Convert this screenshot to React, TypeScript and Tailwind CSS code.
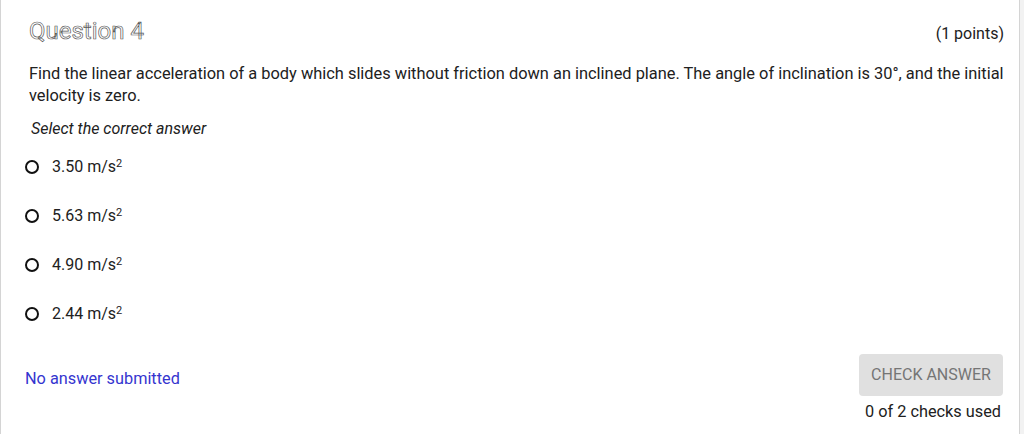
import React from 'react';

const OPTIONS = ['3.50', '5.63', '4.90', '2.44'];

const App: React.FC = () => {
  return (
    <div className="flex h-[434px] w-[1024px] bg-[#f2f2f2] font-['Roboto',sans-serif] text-[#212121]">
      <div className="flex w-[1020px] flex-col border-x border-[#d4d4d4] bg-white pl-[28px] pr-[12px]">
        <div className="flex items-baseline justify-between pt-[16px] pr-[3px]">
          <h2 className="text-[24px] leading-[30px] text-white [-webkit-text-stroke:0.7px_#5a5a5a]">Question 4</h2>
          <span className="text-[16px]">(1 points)</span>
        </div>

        <p className="mt-[17px] text-[16.4px] leading-[22px]">
          Find the linear acceleration of a body which slides without friction down an inclined plane. The angle of
          inclination is 30°, and the initial velocity is zero.
        </p>

        <p className="mt-[11px] pl-[2px] text-[16px] italic leading-[22px]">Select the correct answer</p>

        <div className="mt-[16px] flex flex-col gap-[27px] -ml-[4px]">
          {OPTIONS.map(v => (
            <label key={v} className="flex h-[22px] items-center gap-[13px] text-[16px]">
              <span className="h-[14px] w-[14px] rounded-full border-2 border-[#111]" />
              <span>
                {v} m/s<sup className="text-[11px]">2</sup>
              </span>
            </label>
          ))}
        </div>

        <div className="mt-[29px] flex items-start justify-between pr-[6px]">
          <span className="-ml-[4px] mt-[14px] text-[16.3px] leading-[22px] text-[#3535cf]">No answer submitted</span>
          <div className="flex flex-col items-end">
            <button className="mr-[-2px] h-[42px] w-[144px] rounded bg-[#e0e0e0] text-[16px] text-[#757575]">
              CHECK ANSWER
            </button>
            <span className="mt-[6px] text-[16.3px] leading-[20px]">0 of 2 checks used</span>
          </div>
        </div>
      </div>
    </div>
  );
};

export default App;
